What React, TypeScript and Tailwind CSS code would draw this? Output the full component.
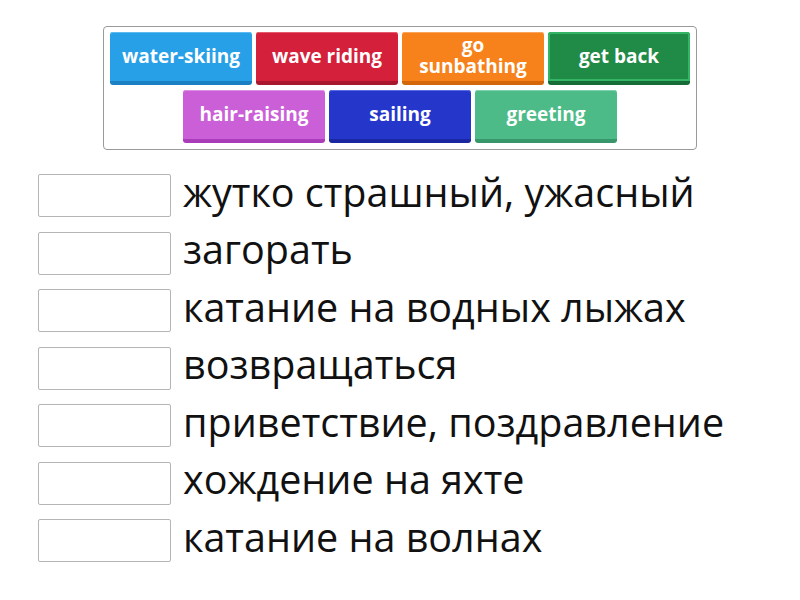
import React from "react";

const tiles1 = [
  { t: "water-skiing", bg: "bg-[#27a0e8]", b: "border-[#1b7fc4]", e: "shadow-[inset_0_1px_0_#5cbcf2]" },
  { t: "wave riding", bg: "bg-[#d4203b]", b: "border-[#a9172d]", e: "shadow-[inset_0_1px_0_#e55a6d]" },
  { t: "go sunbathing", bg: "bg-[#f7811a]", b: "border-[#d5670b]", e: "shadow-[inset_0_1px_0_#fba55c]" },
  { t: "get back", bg: "bg-[#1f8b47]", b: "border-[#166c36]", e: "shadow-[inset_0_0_0_2px_#33b565]" },
];
const tiles2 = [
  { t: "hair-raising", bg: "bg-[#cb5fd8]", b: "border-[#a93cb8]", e: "shadow-[inset_0_1px_0_#de8fe6]" },
  { t: "sailing", bg: "bg-[#2537cb]", b: "border-[#1a27a0]", e: "shadow-[inset_0_1px_0_#5a6ae0]" },
  { t: "greeting", bg: "bg-[#4cbb88]", b: "border-[#37976b]", e: "shadow-[inset_0_1px_0_#7fd3ac]" },
];

const rows = [
  "жутко страшный, ужасный",
  "загорать",
  "катание на водных лыжах",
  "возвращаться",
  "приветствие, поздравление",
  "хождение на яхте",
  "катание на волнах",
];

function Tile({ t, bg, b, e }: { t: string; bg: string; b: string; e: string }) {
  return (
    <div
      className={`w-[142px] h-[53px] rounded-[3px] border-b-[4px] ${bg} ${b} ${e} flex items-center justify-center text-center text-white font-bold text-[19px] leading-[21px] px-3 pb-[1px]`}
    >
      {t}
    </div>
  );
}

export default function App() {
  return (
    <div className="w-[800px] h-[600px] bg-white" style={{ fontFamily: '"Open Sans", sans-serif' }}>
      <div className="pt-[26px] pl-[103px]">
        <div className="w-[594px] h-[124px] border border-[#9a9a9a] rounded-[4px] px-[6px] pt-[5px] flex flex-col items-center gap-[5px]">
          <div className="flex gap-[4px]">
            {tiles1.map((x) => (
              <Tile key={x.t} {...x} />
            ))}
          </div>
          <div className="flex gap-[4px]">
            {tiles2.map((x) => (
              <Tile key={x.t} {...x} />
            ))}
          </div>
        </div>
      </div>
      <div className="pl-[38px] pt-[24px] flex flex-col gap-[14.5px]">
        {rows.map((r) => (
          <div key={r} className="flex items-center h-[43px]">
            <div className="w-[133px] h-[43px] border border-[#b5b5b5] rounded-[2px] bg-white shrink-0" />
            <div className="ml-[12px] text-[39.5px] text-[#111] leading-none whitespace-nowrap -mt-[6px]">{r}</div>
          </div>
        ))}
      </div>
    </div>
  );
}
